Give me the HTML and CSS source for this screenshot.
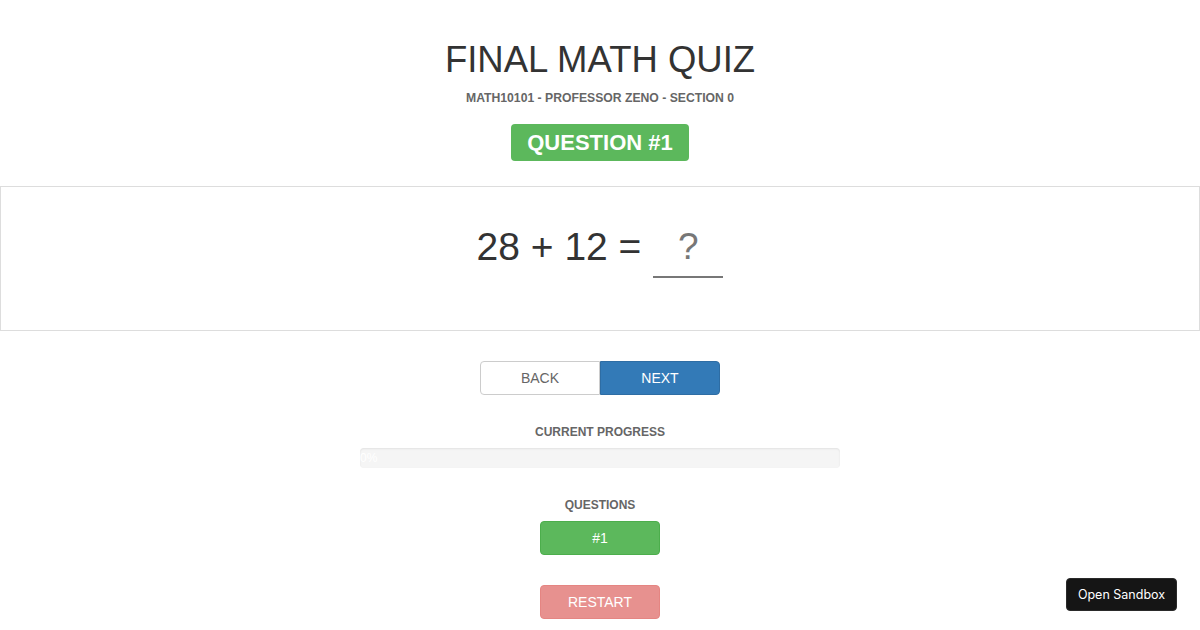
FILE: index.html
```html
<!DOCTYPE html>
<html>
<head>
  <meta charset="UTF-8">
  <meta name="viewport" content="width=device-width, initial-scale=1.0">
  <title>Final Math Quiz</title>
  <link rel="stylesheet" href="styles.css">
</head>
<body>
  <div class="header">
    <h1>FINAL MATH QUIZ</h1>
    <h5 class="course">MATH10101 - PROFESSOR ZENO - SECTION 0</h5>
    <span class="question-badge">QUESTION #1</span>
  </div>

  <div class="question-box">
    <span class="equation">28 + 12 =</span>
    <span class="answer">?</span>
  </div>

  <div class="nav-buttons">
    <button class="btn btn-default">BACK</button>
    <button class="btn btn-primary">NEXT</button>
  </div>

  <div class="section progress-section">
    <h5 class="label">CURRENT PROGRESS</h5>
    <div class="progress">
      <div class="progress-bar" style="width: 0%">0%</div>
    </div>
  </div>

  <div class="section questions-section">
    <h5 class="label">QUESTIONS</h5>
    <button class="btn btn-success">#1</button>
  </div>

  <div class="section restart">
    <button class="btn btn-danger">RESTART</button>
  </div>

  <button class="sandbox-btn">Open Sandbox</button>
</body>
</html>
```

FILE: styles.css
```css
body {
  font-family: "Liberation Sans", Arial, sans-serif;
  margin: 0;
  color: #333;
  text-align: center;
}
.header {
  padding-top: 38px;
}
h1 {
  font-size: 36.5px;
  font-weight: normal;
  margin: 0;
  line-height: 44px;
}
.course {
  font-size: 12.2px;
  font-weight: bold;
  color: #666;
  margin: 8px 0 0;
  line-height: 16px;
}
.question-badge {
  display: inline-block;
  margin-top: 18px;
  background: #5cb85c;
  color: #fff;
  font-weight: bold;
  font-size: 22px;
  line-height: 37px;
  padding: 0 16px;
  border-radius: 4px;
}
.question-box {
  margin-top: 25px;
  border: 1px solid #ddd;
  height: 143px;
  display: flex;
  justify-content: center;
  align-items: flex-start;
}
.equation {
  font-size: 39px;
  line-height: 42px;
  margin-top: 39px;
}
.answer {
  display: inline-block;
  width: 70px;
  margin-left: 12px;
  margin-top: 39px;
  font-size: 37px;
  line-height: 42px;
  color: #777;
  border-bottom: 2px solid #777;
  padding-bottom: 8px;
}
.nav-buttons {
  margin-top: 30px;
  display: flex;
  justify-content: center;
}
.btn {
  font-family: "Liberation Sans", Arial, sans-serif;
  width: 120px;
  height: 34px;
  font-size: 14px;
  border: 1px solid transparent;
  border-radius: 4px;
  cursor: pointer;
}
.btn-default {
  background: #fff;
  border-color: #ccc;
  color: #666;
  border-top-right-radius: 0;
  border-bottom-right-radius: 0;
}
.btn-primary {
  background: #337ab7;
  border-color: #2e6da4;
  color: #fff;
  border-top-left-radius: 0;
  border-bottom-left-radius: 0;
}
.btn-success {
  background: #5cb85c;
  border-color: #4cae4c;
  color: #fff;
}
.btn-danger {
  background: #e7918f;
  border-color: #e58582;
  color: #fff;
}
.section {
  margin-top: 30px;
}
.section.progress-section {
  margin-top: 29px;
}
.section.questions-section {
  margin-top: 29px;
}
.label {
  font-size: 12px;
  font-weight: bold;
  color: #666;
  margin: 0 0 7px;
  line-height: 17px;
}
.progress {
  width: 480px;
  height: 20px;
  margin: 0 auto;
  background: #f5f5f5;
  border-radius: 4px;
  box-shadow: inset 0 1px 2px rgba(0, 0, 0, 0.08);
  text-align: left;
  overflow: hidden;
}
.progress-bar {
  height: 20px;
  line-height: 20px;
  font-size: 12px;
  color: #fff;
  background: #337ab7;
}
.sandbox-btn {
  position: fixed;
  right: 23px;
  bottom: 19px;
  background: #151515;
  color: #fff;
  border: 1px solid #2a2a2a;
  border-radius: 4px;
  font-family: Inter, "Liberation Sans", sans-serif;
  font-size: 12.5px;
  width: 111px;
  height: 33px;
}
```
